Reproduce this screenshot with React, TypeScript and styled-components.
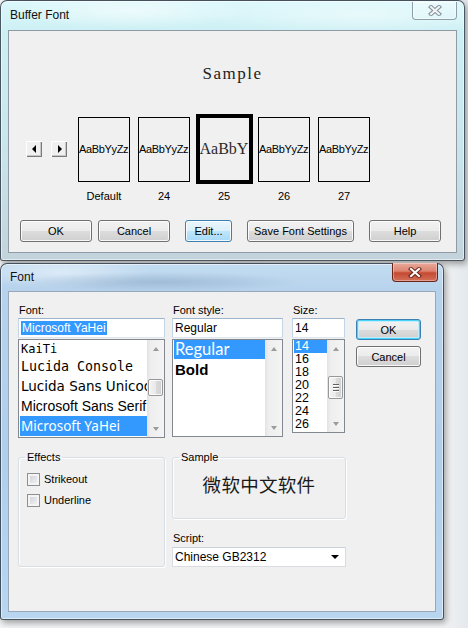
import React, { FC, ReactNode } from 'react'
import styled, { createGlobalStyle, css } from 'styled-components'

const GlobalStyle = createGlobalStyle`
  html, body {
    margin: 0;
    padding: 0;
  }
  body {
    background: #f3f4f5;
    font-family: 'Liberation Sans', Arial, sans-serif;
    font-size: 11px;
    color: #000;
  }
`

type Tone = 'cyan' | 'blue'

const glass: Record<Tone, string> = {
  cyan: `
    radial-gradient(ellipse 120px 18px at 130px 10px, rgba(255,255,255,0.55), transparent),
    radial-gradient(ellipse 160px 20px at 360px 14px, rgba(255,255,255,0.45), transparent),
    linear-gradient(180deg, #dcf8fb 0px, #cdf0f4 30px, #c9e6ec 140px, #c3d3dc 100%)
  `,
  blue: `
    radial-gradient(ellipse 140px 10px at 160px 18px, rgba(110,140,170,0.35), transparent),
    radial-gradient(ellipse 90px 16px at 60px 8px, rgba(255,255,255,0.45), transparent),
    linear-gradient(180deg, #c3dcf1 0px, #b6d2ec 28px, #b0cfec 200px, #b8d6f0 100%)
  `,
}

/* ---------- window chrome ---------- */

const Frame = styled.section<{ $width: number; $tone: Tone }>`
  ${({ $width, $tone }) => css`
    width: ${$width}px;
    box-sizing: border-box;
    flex-shrink: 0;
    padding: 0 7px 7px;
    border: 1px solid rgba(38, 48, 60, 0.8);
    border-radius: 7px 7px 3px 3px;
    background: ${glass[$tone]};
    box-shadow: inset 0 0 0 1px rgba(255, 255, 255, 0.55), 2px 3px 6px rgba(0, 0, 0, 0.35);
  `}
`

const TitleBar = styled.header<{ $height: number }>`
  height: ${({ $height }) => $height}px;
  display: flex;
  align-items: flex-start;
  justify-content: space-between;
`

const TitleText = styled.span<{ $top: number }>`
  padding: ${({ $top }) => $top}px 0 0 2px;
  font-family: 'Liberation Sans', Arial, sans-serif;
  font-size: 12px;
  line-height: 14px;
  color: #111;
`

const CloseButton = styled.button<{ $active: boolean }>`
  ${({ $active }) => css`
    width: ${$active ? 46 : 45}px;
    height: ${$active ? 19 : 18}px;
    margin: ${$active ? '-1px -2px 0 0' : '1px 0 0 0'};
    padding: 0;
    display: flex;
    align-items: center;
    justify-content: center;
    border: 1px solid ${$active ? '#6d2418' : 'rgba(70, 85, 100, 0.55)'};
    border-top: none;
    border-radius: 0 0 4px 4px;
    background: ${$active
      ? 'linear-gradient(180deg, #e9a99b 0%, #dc8470 45%, #c44a32 55%, #d4705a 100%)'
      : 'linear-gradient(180deg, rgba(255,255,255,0.35), rgba(255,255,255,0.1))'};
    box-shadow: inset 0 0 0 1px rgba(255, 255, 255, ${$active ? 0.35 : 0.5});
  `}
`

const CloseGlyph: FC<{ active: boolean }> = ({ active }) => (
  <svg width="14" height="11" viewBox="0 0 14 11">
    <path
      d="M3 2 L11 9 M11 2 L3 9"
      stroke={active ? '#5a1a10' : '#5d6b78'}
      strokeWidth="4.2"
      strokeLinecap="square"
      opacity={active ? 0.8 : 0.7}
    />
    <path d="M3 2 L11 9 M11 2 L3 9" stroke={active ? '#ffffff' : '#f4f6f8'} strokeWidth="2" strokeLinecap="square" />
  </svg>
)

const Client = styled.div<{ $height: number; $edge: string }>`
  height: ${({ $height }) => $height}px;
  box-sizing: border-box;
  border: 1px solid ${({ $edge }) => $edge};
  background: #f0f0f0;
`

interface WindowProps {
  title: string
  width: number
  titleHeight: number
  tone: Tone
  active?: boolean
  children: ReactNode
}

const Window: FC<WindowProps> = ({ title, width, titleHeight, tone, active = false, children }) => (
  <Frame $width={width} $tone={tone}>
    <TitleBar $height={titleHeight}>
      <TitleText $top={titleHeight > 28 ? 7 : 6}>{title}</TitleText>
      <CloseButton $active={active} aria-label="Close">
        <CloseGlyph active={active} />
      </CloseButton>
    </TitleBar>
    {children}
  </Frame>
)

/* ---------- push buttons ---------- */

type ButtonKind = 'normal' | 'hot' | 'default'

const PushButton = styled.button<{ $w: number; $h?: number; $kind?: ButtonKind }>`
  ${({ $w, $h = 22, $kind = 'normal' }) => css`
    width: ${$w}px;
    height: ${$h}px;
    box-sizing: border-box;
    padding: 0;
    font-family: 'Liberation Sans', Arial, sans-serif;
    font-size: 11px;
    color: #000;
    border-radius: 3px;
    border: 1px solid ${$kind === 'normal' ? '#707070' : '#3c7fb1'};
    background: ${$kind === 'hot'
      ? 'linear-gradient(180deg, #eaf6fd 0%, #d9f0fc 50%, #bee6fd 50%, #a7d9f5 100%)'
      : 'linear-gradient(180deg, #f2f2f2 0%, #ebebeb 50%, #dddddd 50%, #cfcfcf 100%)'};
    box-shadow: ${$kind === 'default'
      ? 'inset 0 0 0 1px #48d3fa, inset 0 0 0 2px #c4ecfb'
      : 'inset 0 0 0 1px rgba(255, 255, 255, 0.85)'};
  `}
`

/* ---------- buffer font window ---------- */

const BufferBody = styled.div`
  display: flex;
  flex-direction: column;
  align-items: stretch;
`

const SampleHeading = styled.div`
  margin-top: 33px;
  height: 20px;
  text-align: center;
  font-family: 'Liberation Serif', 'Times New Roman', serif;
  font-size: 17px;
  letter-spacing: 1.5px;
  line-height: 20px;
  color: #1e1e1e;
`

const PreviewRow = styled.div`
  margin-top: 30px;
  padding-left: 17px;
  display: flex;
  align-items: flex-start;
`

const Stepper = styled.div`
  height: 70px;
  margin-right: 7px;
  display: flex;
  align-items: center;
  gap: 9px;
`

const StepButton = styled.button`
  width: 16px;
  height: 16px;
  padding: 0;
  display: flex;
  align-items: center;
  justify-content: center;
  border: none;
  background: #f0f0f0;
  box-shadow: inset 1px 1px #ffffff, inset -1px -1px #7a7a7a, inset -2px -2px #c8c8c8;
`

const StepArrow = styled.span<{ $dir: 'left' | 'right' }>`
  width: 0;
  height: 0;
  border-top: 4px solid transparent;
  border-bottom: 4px solid transparent;
  ${({ $dir }) =>
    $dir === 'left'
      ? css`border-right: 4px solid #000; margin-left: -1px;`
      : css`border-left: 4px solid #000; margin-left: 1px;`}
`

const PreviewSlot = styled.div`
  width: 60px;
  display: flex;
  flex-direction: column;
  align-items: center;
`

const PreviewFrame = styled.div`
  height: 70px;
  display: flex;
  align-items: center;
`

const PreviewBox = styled.div<{ $selected?: boolean }>`
  ${({ $selected }) => css`
    width: ${$selected ? 57 : 52}px;
    height: ${$selected ? 70 : 65}px;
    box-sizing: border-box;
    border: ${$selected ? 4 : 1}px solid #000;
    display: flex;
    align-items: center;
    overflow: hidden;
    white-space: nowrap;
    font-family: ${$selected ? "'Liberation Serif', 'Times New Roman', serif" : "'Liberation Sans', Arial, sans-serif"};
    font-size: ${$selected ? 16 : 11}px;
    color: ${$selected ? '#2a2a2a' : '#000'};
    letter-spacing: ${$selected ? 0 : -0.35}px;
  `}
`

const PreviewLabel = styled.div`
  margin-top: 5px;
  line-height: 14px;
  font-size: 11px;
`

const ButtonRow = styled.div`
  margin-top: 17px;
  padding-left: 11px;
  display: flex;
  gap: 15px;
`

const ButtonPair = styled.div`
  display: flex;
  gap: 6px;
`

// the enlarged preview only has room for the first five glyphs
const previews = [
  { label: 'Default', text: 'AaBbYyZz' },
  { label: '24', text: 'AaBbYyZz' },
  { label: '25', text: 'AaBbY', selected: true },
  { label: '26', text: 'AaBbYyZz' },
  { label: '27', text: 'AaBbYyZz' },
]

const BufferFontWindow: FC = () => (
  <Window title="Buffer Font" width={465} titleHeight={29} tone="cyan">
    <Client $height={223} $edge="#8f9aa4">
      <BufferBody>
        <SampleHeading>Sample</SampleHeading>
        <PreviewRow>
          <Stepper>
            <StepButton aria-label="Previous">
              <StepArrow $dir="left" />
            </StepButton>
            <StepButton aria-label="Next">
              <StepArrow $dir="right" />
            </StepButton>
          </Stepper>
          {previews.map(p => (
            <PreviewSlot key={p.label}>
              <PreviewFrame>
                <PreviewBox $selected={p.selected}>{p.text}</PreviewBox>
              </PreviewFrame>
              <PreviewLabel>{p.label}</PreviewLabel>
            </PreviewSlot>
          ))}
        </PreviewRow>
        <ButtonRow>
          <ButtonPair>
            <PushButton $w={72}>OK</PushButton>
            <PushButton $w={72}>Cancel</PushButton>
          </ButtonPair>
          <PushButton $w={47} $kind="hot">Edit...</PushButton>
          <PushButton $w={107}>Save Font Settings</PushButton>
          <PushButton $w={72}>Help</PushButton>
        </ButtonRow>
      </BufferBody>
    </Client>
  </Window>
)

/* ---------- font dialog ---------- */

const FontBody = styled.div`
  padding: 11px 0 0 9px;
  display: flex;
  flex-direction: column;
`

const PickerRow = styled.div`
  display: flex;
  align-items: flex-start;
`

const PickerColumn = styled.div<{ $w: number; $gap: number }>`
  width: ${({ $w }) => $w}px;
  margin-right: ${({ $gap }) => $gap}px;
  display: flex;
  flex-direction: column;
`

const FieldLabel = styled.label`
  display: block;
  height: 14px;
  line-height: 14px;
  font-size: 11px;
  padding-left: 1px;
`

const TextBox = styled.div`
  height: 20px;
  margin-top: 1px;
  box-sizing: border-box;
  padding: 0 2px;
  display: flex;
  align-items: center;
  border: 1px solid #abadb3;
  border-top-color: #9cb4cc;
  border-left-color: #c5d5e6;
  border-right-color: #c5d5e6;
  border-bottom-color: #dde6ef;
  background: #fff;
  font-size: 12px;
  white-space: nowrap;
  overflow: hidden;
`

const SelectedText = styled.span`
  background: #3399ff;
  color: #fff;
  padding: 0 1px;
  line-height: 14px;
`

const ListBox = styled.div<{ $h: number }>`
  height: ${({ $h }) => $h}px;
  margin-top: 1px;
  box-sizing: border-box;
  border: 1px solid #828790;
  background: #fff;
  display: flex;
`

const ListItems = styled.div`
  flex: 1;
  min-width: 0;
  padding-left: 1px;
  overflow: hidden;
`

const ListItem = styled.div<{ $h: number; $family: string; $size: number; $selected?: boolean; $bold?: boolean }>`
  ${({ $h, $family, $size, $selected, $bold }) => css`
    height: ${$h}px;
    line-height: ${$h}px;
    padding-left: 1px;
    font-family: ${$family};
    font-size: ${$size}px;
    font-weight: ${$bold ? 700 : 400};
    white-space: nowrap;
    overflow: hidden;
    color: ${$selected ? '#fff' : '#000'};
    background: ${$selected ? '#3399ff' : 'transparent'};
  `}
`

/* scroll bar */

const ScrollBar = styled.div`
  width: 17px;
  flex-shrink: 0;
  display: flex;
  flex-direction: column;
  background: linear-gradient(90deg, #e2e2e2 0%, #eeeeee 20%, #f4f4f4 100%);
`

const ScrollArrowCell = styled.div`
  height: 17px;
  display: flex;
  align-items: center;
  justify-content: center;
`

const ScrollArrow = styled.span<{ $up: boolean }>`
  width: 0;
  height: 0;
  border-left: 3.5px solid transparent;
  border-right: 3.5px solid transparent;
  ${({ $up }) =>
    $up ? css`border-bottom: 4px solid #9b9b9b;` : css`border-top: 4px solid #9b9b9b;`}
`

const ScrollTrack = styled.div`
  flex: 1;
`

const ScrollThumb = styled.div<{ $offset: number; $h: number }>`
  margin: ${({ $offset }) => $offset}px 1px 0;
  height: ${({ $h }) => $h}px;
  box-sizing: border-box;
  border: 1px solid #979797;
  border-radius: 2px;
  background: linear-gradient(90deg, #f4f4f4 0%, #e9e9e9 50%, #dcdcdc 51%, #d0d0d0 100%);
  box-shadow: inset 0 0 0 1px rgba(255, 255, 255, 0.8);
  display: flex;
  flex-direction: column;
  align-items: center;
  justify-content: center;
  gap: 2px;
`

const GripLine = styled.span`
  width: 6px;
  height: 1px;
  background: #5f5f5f;
  box-shadow: 0 1px #ffffff;
`

const Scroller: FC<{ thumb?: { offset: number; h: number }; grip?: boolean }> = ({ thumb, grip }) => (
  <ScrollBar>
    <ScrollArrowCell>
      <ScrollArrow $up />
    </ScrollArrowCell>
    <ScrollTrack>
      {thumb && (
        <ScrollThumb $offset={thumb.offset} $h={thumb.h}>
          {grip && (
            <>
              <GripLine />
              <GripLine />
              <GripLine />
            </>
          )}
        </ScrollThumb>
      )}
    </ScrollTrack>
    <ScrollArrowCell>
      <ScrollArrow $up={false} />
    </ScrollArrowCell>
  </ScrollBar>
)

const DialogButtons = styled.div`
  padding-top: 16px;
  display: flex;
  flex-direction: column;
  gap: 6px;
`

/* lower half: effects, sample, script */

const LowerRow = styled.div`
  margin-top: 12px;
  display: flex;
  align-items: flex-start;
  gap: 7px;
`

const Group = styled.fieldset<{ $w: number; $h: number }>`
  width: ${({ $w }) => $w}px;
  height: ${({ $h }) => $h}px;
  box-sizing: border-box;
  margin: 0;
  padding: 0;
  min-width: 0;
  border: 1px solid #d5dfe5;
  border-radius: 3px;
  box-shadow: inset 1px 1px #ffffff, 1px 1px #ffffff;
`

const GroupTitle = styled.legend`
  margin-left: 6px;
  padding: 0 2px;
  line-height: 14px;
  font-size: 11px;
`

const CheckList = styled.div`
  padding: 9px 0 0 8px;
  display: flex;
  flex-direction: column;
  gap: 8px;
`

const CheckRow = styled.label`
  display: flex;
  align-items: center;
  gap: 4px;
  line-height: 13px;
  font-size: 11px;
`

const CheckBox = styled.span`
  width: 13px;
  height: 13px;
  box-sizing: border-box;
  border: 1px solid #8e8f8f;
  background: linear-gradient(135deg, #cbcfd5 0%, #f6f6f6 100%);
  box-shadow: inset 0 0 0 2px #f4f4f4;
`

const SideColumn = styled.div`
  width: 174px;
  display: flex;
  flex-direction: column;
`

const SampleView = styled.div`
  height: 40px;
  display: flex;
  align-items: center;
  justify-content: center;
  font-family: 'Noto Sans CJK SC', 'Noto Sans', sans-serif;
  font-size: 18.5px;
  color: #1a1a1a;
  letter-spacing: 0.3px;
`

const ScriptLabel = styled(FieldLabel)`
  margin-top: 12px;
`

const ComboBox = styled.div`
  height: 20px;
  margin-top: 2px;
  box-sizing: border-box;
  padding: 0 6px 0 2px;
  display: flex;
  align-items: center;
  justify-content: space-between;
  border: 1px solid #d9dde2;
  border-top-color: #c9d0d8;
  background: #fff;
  font-size: 12px;
`

const ComboArrow = styled.span`
  width: 0;
  height: 0;
  border-left: 4px solid transparent;
  border-right: 4px solid transparent;
  border-top: 4px solid #000;
`

const fontFaces = [
  { name: 'KaiTi', family: "'DejaVu Sans Mono', monospace", size: 12, h: 18 },
  { name: 'Lucida Console', family: "'DejaVu Sans Mono', monospace", size: 13.3, h: 18 },
  { name: 'Lucida Sans Unicode', family: "'DejaVu Sans', sans-serif", size: 13.5, h: 20 },
  { name: 'Microsoft Sans Serif', family: "'Liberation Sans', Arial, sans-serif", size: 14, h: 20 },
  { name: 'Microsoft YaHei', family: "'Noto Sans', sans-serif", size: 13.5, h: 20, selected: true },
]

const sizes = ['14', '16', '18', '20', '22', '24', '26']

const FontDialog: FC = () => (
  <Window title="Font" width={444} titleHeight={27} tone="blue" active>
    <Client $height={321} $edge="#98a8b8">
      <FontBody>
        <PickerRow>
          <PickerColumn $w={147} $gap={7}>
            <FieldLabel>Font:</FieldLabel>
            <TextBox>
              <SelectedText>Microsoft YaHei</SelectedText>
            </TextBox>
            <ListBox $h={99}>
              <ListItems>
                {fontFaces.map(f => (
                  <ListItem key={f.name} $h={f.h} $family={f.family} $size={f.size} $selected={f.selected}>
                    {f.name}
                  </ListItem>
                ))}
              </ListItems>
              <Scroller thumb={{ offset: 22, h: 17 }} />
            </ListBox>
          </PickerColumn>

          <PickerColumn $w={111} $gap={9}>
            <FieldLabel>Font style:</FieldLabel>
            <TextBox>Regular</TextBox>
            <ListBox $h={98}>
              <ListItems>
                <ListItem $h={19} $family="Lato, 'Noto Sans', sans-serif" $size={16.5} $selected>
                  Regular
                </ListItem>
                <ListItem $h={21} $family="'Liberation Sans', Arial, sans-serif" $size={15} $bold>
                  Bold
                </ListItem>
              </ListItems>
              <Scroller />
            </ListBox>
          </PickerColumn>

          <PickerColumn $w={53} $gap={11}>
            <FieldLabel>Size:</FieldLabel>
            <TextBox>14</TextBox>
            <ListBox $h={94}>
              <ListItems>
                {sizes.map((s, i) => (
                  <ListItem key={s} $h={13} $family="'Liberation Sans', Arial, sans-serif" $size={12.5} $selected={i === 0}>
                    {s}
                  </ListItem>
                ))}
              </ListItems>
              <Scroller thumb={{ offset: 19, h: 23 }} grip />
            </ListBox>
          </PickerColumn>

          <DialogButtons>
            <PushButton $w={65} $h={21} $kind="default">OK</PushButton>
            <PushButton $w={65} $h={21}>Cancel</PushButton>
          </DialogButtons>
        </PickerRow>

        <LowerRow>
          <Group $w={147} $h={117}>
            <GroupTitle>Effects</GroupTitle>
            <CheckList>
              <CheckRow>
                <CheckBox />
                Strikeout
              </CheckRow>
              <CheckRow>
                <CheckBox />
                Underline
              </CheckRow>
            </CheckList>
          </Group>

          <SideColumn>
            <Group $w={174} $h={69}>
              <GroupTitle>Sample</GroupTitle>
              <SampleView>微软中文软件</SampleView>
            </Group>
            <ScriptLabel>Script:</ScriptLabel>
            <ComboBox>
              Chinese GB2312
              <ComboArrow />
            </ComboBox>
          </SideColumn>
        </LowerRow>
      </FontBody>
    </Client>
  </Window>
)

const Desktop = styled.main`
  width: 468px;
  height: 628px;
  overflow: hidden;
  display: flex;
  flex-direction: column;
  gap: 2px;
  background: linear-gradient(90deg, #f3f4f5 0%, #f3f4f5 94%, #e4e8ec 100%);
`

export default function App() {
  return (
    <>
      <GlobalStyle />
      <Desktop>
        <BufferFontWindow />
        <FontDialog />
      </Desktop>
    </>
  )
}
